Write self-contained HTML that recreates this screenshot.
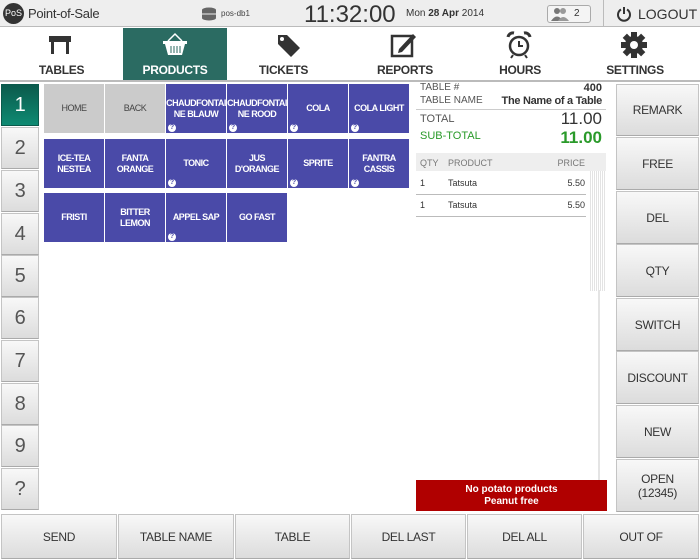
<!DOCTYPE html>
<html><head><meta charset="utf-8"><style>
*{box-sizing:border-box;margin:0;padding:0}
body{width:700px;height:560px;overflow:hidden;background:#fff;font-family:"Liberation Sans",sans-serif;position:relative;color:#333}
.a{position:absolute}
.btn{position:absolute;background:linear-gradient(#f8f8f8,#dcdcdc);border:1px solid #c4c4c4;border-bottom-color:#aaa;display:flex;align-items:center;justify-content:center;text-align:center;font-size:12px;color:#333;letter-spacing:-0.3px}
.num{font-size:20px;color:#555}
.p{position:absolute;width:60px;height:49px;background:#4a4aa8;color:#fff;font-size:9px;font-weight:bold;display:flex;align-items:center;justify-content:center;text-align:center;line-height:11px;letter-spacing:-0.5px;white-space:nowrap}
.p.g{background:#cbcbcb;color:#444;font-weight:normal}
.q{position:absolute;left:2px;bottom:1px;width:8px;height:8px;border-radius:50%;background:#fff;color:#4a4aa8;font-size:7px;line-height:8px;text-align:center;letter-spacing:0}
.nav{position:absolute;top:28px;height:52px;display:flex;flex-direction:column;align-items:center;justify-content:flex-end;padding-bottom:3px;font-size:12px;font-weight:bold;color:#333;letter-spacing:-0.3px}
</style></head><body>
<div class="a" style="left:0;top:0;width:700px;height:27px;background:#eeeeee;border-bottom:1px solid #bbb"></div>
<div class="a" style="left:3px;top:3px;width:21px;height:21px;border-radius:50%;background:#333;color:#fff;font-size:9px;line-height:21px;text-align:center">PoS</div>
<div class="a" style="left:28px;top:6px;font-size:13px;color:#333;letter-spacing:-0.3px">Point-of-Sale</div>
<svg class="a" style="left:201px;top:7px" width="16" height="14"><ellipse cx="8" cy="3" rx="7" ry="2.5" fill="#666"/><rect x="1" y="3" width="14" height="3.5" fill="#666"/><rect x="1" y="7.5" width="14" height="3" fill="#666"/><ellipse cx="8" cy="11" rx="7" ry="2.5" fill="#666"/></svg>
<div class="a" style="left:221px;top:9px;font-size:8px;color:#444">pos-db1</div>
<div class="a" style="left:304px;top:1px;font-size:24px;color:#333">11:32:00</div>
<div class="a" style="left:406px;top:8px;font-size:10px;color:#333">Mon <b>28 Apr</b> 2014</div>
<div class="a" style="left:547px;top:5px;width:44px;height:18px;border:1px solid #aaa;border-radius:3px;background:#f4f4f4"></div>
<svg class="a" style="left:551px;top:7px" width="18" height="14"><circle cx="6" cy="4" r="3" fill="#777"/><path d="M0 14 Q6 5 12 14Z" fill="#777"/><circle cx="12" cy="4" r="3" fill="#999"/><path d="M7 14 Q12 6 18 14Z" fill="#999"/></svg>
<div class="a" style="left:574px;top:8px;font-size:10px">2</div>
<div class="a" style="left:603px;top:0;width:1px;height:27px;background:#bbb"></div>
<svg class="a" style="left:616px;top:6px" width="16" height="16"><path d="M5 3.5 A6 6 0 1 0 11 3.5" fill="none" stroke="#333" stroke-width="2"/><line x1="8" y1="1" x2="8" y2="8" stroke="#333" stroke-width="2"/></svg>
<div class="a" style="left:638px;top:6px;font-size:14px;color:#333">LOGOUT</div>
<div class="a" style="left:123px;top:28px;width:104px;height:52px;background:#2b6b62"></div>
<div class="a" style="left:0;top:80px;width:700px;height:2px;background:#bbb"></div>
<div class="nav" style="left:0;width:123px">TABLES</div>
<div class="nav" style="left:123px;width:104px;color:#fff">PRODUCTS</div>
<div class="nav" style="left:227px;width:113px">TICKETS</div>
<div class="nav" style="left:340px;width:130px">REPORTS</div>
<div class="nav" style="left:470px;width:100px">HOURS</div>
<div class="nav" style="left:570px;width:130px">SETTINGS</div>
<svg class="a" style="left:47px;top:34px" width="26" height="22"><rect x="2" y="2" width="22" height="6" fill="#333"/><rect x="4" y="8" width="3" height="12" fill="#333"/><rect x="19" y="8" width="3" height="12" fill="#333"/></svg>
<svg class="a" style="left:162px;top:32px" width="26" height="24"><path d="M6 9 L13 2 L20 9" fill="none" stroke="#fff" stroke-width="1.5"/><rect x="1" y="9" width="24" height="3" fill="#fff"/><path d="M3 12 L23 12 L20 23 L6 23Z" fill="#fff"/><g stroke="#2b6b62" stroke-width="1"><line x1="9" y1="14" x2="9" y2="21"/><line x1="12" y1="14" x2="12" y2="21"/><line x1="15" y1="14" x2="15" y2="21"/><line x1="18" y1="14" x2="18" y2="21"/></g></svg>
<svg class="a" style="left:274px;top:31px" width="28" height="28"><path d="M4 4 L13 4 L26 17 L17 26 L4 13Z" fill="#333"/><circle cx="8" cy="8" r="2" fill="#fff"/></svg>
<svg class="a" style="left:390px;top:32px" width="28" height="26"><rect x="2" y="4" width="20" height="20" fill="none" stroke="#333" stroke-width="2.5"/><path d="M9 17 L23 2 L26 5 L12 20 L8 21Z" fill="#333"/></svg>
<svg class="a" style="left:506px;top:31px" width="26" height="28"><circle cx="13" cy="15" r="9" fill="none" stroke="#333" stroke-width="2.5"/><path d="M13 10 V15 H17" fill="none" stroke="#333" stroke-width="2"/><path d="M2 6 A5 5 0 0 1 8 2" fill="none" stroke="#333" stroke-width="3"/><path d="M24 6 A5 5 0 0 0 18 2" fill="none" stroke="#333" stroke-width="3"/><line x1="7" y1="24" x2="5" y2="27" stroke="#333" stroke-width="2"/><line x1="19" y1="24" x2="21" y2="27" stroke="#333" stroke-width="2"/></svg>
<svg class="a" style="left:621px;top:32px" width="26" height="26"><g fill="#333"><circle cx="13" cy="13" r="9"/><rect x="10" y="0" width="6" height="26"/><rect x="0" y="10" width="26" height="6"/><rect x="10" y="0" width="6" height="26" transform="rotate(45 13 13)"/><rect x="10" y="0" width="6" height="26" transform="rotate(-45 13 13)"/></g><circle cx="13" cy="13" r="4" fill="#fff"/></svg>
<div class="btn num" style="left:1px;top:84px;width:38px;height:42px;background:linear-gradient(#0b5a4c,#0e8a72);color:#fff;border-color:#0b5a4c">1</div>
<div class="btn num" style="left:1px;top:127px;width:38px;height:42px">2</div>
<div class="btn num" style="left:1px;top:170px;width:38px;height:42px">3</div>
<div class="btn num" style="left:1px;top:213px;width:38px;height:42px">4</div>
<div class="btn num" style="left:1px;top:255px;width:38px;height:42px">5</div>
<div class="btn num" style="left:1px;top:297px;width:38px;height:42px">6</div>
<div class="btn num" style="left:1px;top:340px;width:38px;height:42px">7</div>
<div class="btn num" style="left:1px;top:383px;width:38px;height:42px">8</div>
<div class="btn num" style="left:1px;top:425px;width:38px;height:42px">9</div>
<div class="btn num" style="left:1px;top:468px;width:38px;height:42px">?</div>
<div class="p g" style="left:44px;top:84px">HOME</div>
<div class="p g" style="left:105px;top:84px">BACK</div>
<div class="p" style="left:166px;top:84px">CHAUDFONTAI<br>NE BLAUW<span class="q">?</span></div>
<div class="p" style="left:227px;top:84px">CHAUDFONTAI<br>NE ROOD<span class="q">?</span></div>
<div class="p" style="left:288px;top:84px">COLA<span class="q">?</span></div>
<div class="p" style="left:349px;top:84px">COLA LIGHT<span class="q">?</span></div>
<div class="p" style="left:44px;top:139px">ICE-TEA<br>NESTEA</div>
<div class="p" style="left:105px;top:139px">FANTA<br>ORANGE</div>
<div class="p" style="left:166px;top:139px">TONIC<span class="q">?</span></div>
<div class="p" style="left:227px;top:139px">JUS<br>D'ORANGE</div>
<div class="p" style="left:288px;top:139px">SPRITE<span class="q">?</span></div>
<div class="p" style="left:349px;top:139px">FANTRA<br>CASSIS<span class="q">?</span></div>
<div class="p" style="left:44px;top:193px">FRISTI</div>
<div class="p" style="left:105px;top:193px">BITTER<br>LEMON</div>
<div class="p" style="left:166px;top:193px">APPEL SAP<span class="q">?</span></div>
<div class="p" style="left:227px;top:193px">GO FAST</div>
<div class="a" style="left:420px;top:82px;font-size:10px;color:#555">TABLE #</div>
<div class="a" style="left:540px;top:82px;width:62px;text-align:right;font-size:11px;font-weight:bold">400</div>
<div class="a" style="left:420px;top:95px;font-size:10px;color:#555">TABLE NAME</div>
<div class="a" style="left:480px;top:95px;width:122px;text-align:right;font-size:11px;font-weight:bold;letter-spacing:-0.3px">The Name of a Table</div>
<div class="a" style="left:416px;top:109px;width:190px;height:1px;background:#ccc"></div>
<div class="a" style="left:420px;top:113px;font-size:11px;color:#555">TOTAL</div>
<div class="a" style="left:500px;top:109px;width:102px;text-align:right;font-size:17px">11.00</div>
<div class="a" style="left:420px;top:130px;font-size:11px;color:#2a9a2a">SUB-TOTAL</div>
<div class="a" style="left:500px;top:128px;width:102px;text-align:right;font-size:17px;font-weight:bold;color:#2a9a2a">11.00</div>
<div class="a" style="left:416px;top:153px;width:190px;height:18px;background:#eee"></div>
<div class="a" style="left:420px;top:158px;font-size:9px;color:#777">QTY</div>
<div class="a" style="left:448px;top:158px;font-size:9px;color:#777">PRODUCT</div>
<div class="a" style="left:540px;top:158px;width:45px;text-align:right;font-size:9px;color:#777">PRICE</div>
<div class="a" style="left:420px;top:178px;font-size:9px">1</div>
<div class="a" style="left:448px;top:178px;font-size:9px">Tatsuta</div>
<div class="a" style="left:540px;top:178px;width:45px;text-align:right;font-size:9px">5.50</div>
<div class="a" style="left:416px;top:194px;width:170px;height:1px;background:#bbb"></div>
<div class="a" style="left:420px;top:200px;font-size:9px">1</div>
<div class="a" style="left:448px;top:200px;font-size:9px">Tatsuta</div>
<div class="a" style="left:540px;top:200px;width:45px;text-align:right;font-size:9px">5.50</div>
<div class="a" style="left:416px;top:216px;width:170px;height:1px;background:#bbb"></div>
<div class="a" style="left:590px;top:171px;width:16px;height:120px;background:repeating-linear-gradient(90deg,#ddd 0 1px,#fff 1px 2px),#eee;opacity:.8"></div>
<div class="a" style="left:598px;top:290px;width:2px;height:190px;background:#e4e4e4"></div>
<div class="a" style="left:416px;top:480px;width:191px;height:31px;background:#b00000;color:#fff;font-size:10px;font-weight:bold;text-align:center;line-height:12px;padding-top:4px">No potato products<br>Peanut free</div>
<div class="btn" style="left:616px;top:84px;width:83px;height:52px">REMARK</div>
<div class="btn" style="left:616px;top:137px;width:83px;height:53px">FREE</div>
<div class="btn" style="left:616px;top:191px;width:83px;height:53px">DEL</div>
<div class="btn" style="left:616px;top:244px;width:83px;height:53px">QTY</div>
<div class="btn" style="left:616px;top:298px;width:83px;height:53px">SWITCH</div>
<div class="btn" style="left:616px;top:351px;width:83px;height:53px">DISCOUNT</div>
<div class="btn" style="left:616px;top:405px;width:83px;height:53px">NEW</div>
<div class="btn" style="left:616px;top:459px;width:83px;height:53px">OPEN<br>(12345)</div>
<div class="btn" style="left:1px;top:514px;width:116px;height:45px">SEND</div>
<div class="btn" style="left:118px;top:514px;width:116px;height:45px">TABLE NAME</div>
<div class="btn" style="left:235px;top:514px;width:115px;height:45px">TABLE</div>
<div class="btn" style="left:351px;top:514px;width:115px;height:45px">DEL LAST</div>
<div class="btn" style="left:467px;top:514px;width:115px;height:45px">DEL ALL</div>
<div class="btn" style="left:583px;top:514px;width:116px;height:45px">OUT OF</div>
</body></html>
